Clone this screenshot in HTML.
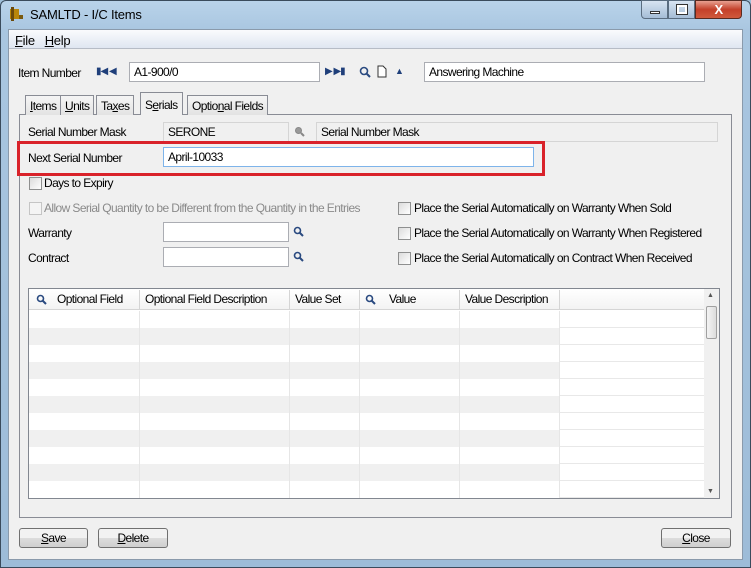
<!DOCTYPE html>
<html><head><style>
*{margin:0;padding:0;box-sizing:border-box}
body{width:751px;height:568px;overflow:hidden;background:#9fbfd9;font-family:"Liberation Sans",sans-serif;font-size:12px;color:#000;letter-spacing:-0.6px;position:relative}
.a{position:absolute}
.frame{left:0;top:0;width:751px;height:568px;background:linear-gradient(180deg,#b9d3ea 0,#a9c6e0 30px,#9dbcd8 100%);border:1px solid #3a4b5c;border-radius:6px 6px 0 0}
.client{left:8px;top:29px;width:735px;height:531px;background:#f0f0f0;border:1px solid #8a9aab}
.menu{left:9px;top:30px;width:733px;height:19px;background:linear-gradient(#fafbfd,#dfe6f1);border-bottom:1px solid #b6bcc6}
.in{background:#fff;border:1px solid #abadb3;height:20px;padding:2px 4px}
.dis{background:#f0f0f0;border:1px solid #d5d5d5;height:20px;padding:2px 4px}
.cb{width:13px;height:13px;border:1px solid #8e8f8f;background:linear-gradient(135deg,#dcdcdc,#fff)}
.btn{height:20px;border:1px solid #707070;border-radius:3px;background:linear-gradient(#f2f2f2 50%,#dddddd 50%,#cfcfcf);text-align:center;line-height:18px}
.tab{top:95px;height:20px;border:1px solid #898c95;border-bottom:none;background:linear-gradient(#f5f5f5,#e3e3e3);padding:3px 4px}
.hd{top:290px;height:20px;line-height:19px;border-right:1px solid #d5d5d5;padding-left:6px}
</style></head><body>
<div class="a frame"></div>
<svg class="a" style="left:8px;top:6px" width="16" height="16"><rect x="2" y="3" width="9" height="10" fill="#b8860b"/><rect x="3" y="1" width="3" height="14" fill="#6b4a0b"/><rect x="11" y="9" width="4" height="4" fill="#7a5a10"/></svg>
<div class="a" style="left:30px;top:7px;font-size:13px;letter-spacing:-0.2px">SAMLTD - I/C Items</div>
<div class="a" style="left:641px;top:0;width:27px;height:19px;border:1px solid #5a6d80;border-radius:0 0 0 4px;background:linear-gradient(#d7e4f2,#a5bdd6)"><div class="a" style="left:8px;top:10px;width:10px;height:3px;background:#fff;border:1px solid #333"></div></div>
<div class="a" style="left:668px;top:0;width:27px;height:19px;border:1px solid #5a6d80;background:linear-gradient(#d7e4f2,#a5bdd6)"><div class="a" style="left:8px;top:4px;width:10px;height:9px;border:2px solid #fff;outline:1px solid #333"></div></div>
<div class="a" style="left:695px;top:0;width:47px;height:19px;border:1px solid #5a2a20;border-radius:0 0 4px 0;background:linear-gradient(#e8a090,#c4402a 50%,#d05a3c);color:#fff;text-align:center;font-weight:bold;font-size:13px;line-height:17px">X</div>
<div class="a client"></div>
<div class="a menu"></div>
<div class="a" style="left:15px;top:33px;font-size:13px;letter-spacing:-0.3px"><u>F</u>ile &nbsp; <u>H</u>elp</div>

<div class="a" style="left:18px;top:66px">Item Number</div>
<div class="a" style="left:96px;top:66px;color:#1f3f7a;font-size:10px;letter-spacing:-1px">▮◀ ◀</div>
<div class="a in" style="left:129px;top:62px;width:191px">A1-900/0</div>
<div class="a" style="left:325px;top:66px;color:#1f3f7a;font-size:10px;letter-spacing:-1px">▶ ▶▮</div>
<svg class="a" style="left:359px;top:66px" width="12" height="12"><circle cx="5" cy="5" r="3.5" fill="none" stroke="#2a4a80" stroke-width="1.6"/><path d="M7.5 7.5L11 11" stroke="#2a4a80" stroke-width="2"/></svg>
<svg class="a" style="left:377px;top:65px" width="10" height="13"><path d="M1 1H6L9 4V12H1Z" fill="#fff" stroke="#333"/></svg>
<div class="a" style="left:395px;top:66px;color:#1f3f7a;font-size:9px">▲</div>
<div class="a in" style="left:424px;top:62px;width:281px">Answering Machine</div>

<div class="a" style="left:19px;top:114px;width:713px;height:404px;border:1px solid #898c95;background:#f0f0f0"></div>
<div class="a tab" style="left:25px"><u>I</u>tems</div>
<div class="a tab" style="left:60px"><u>U</u>nits</div>
<div class="a tab" style="left:96px">Ta<u>x</u>es</div>
<div class="a tab" style="left:140px;top:92px;height:23px;background:#f0f0f0;padding-top:5px">S<u>e</u>rials</div>
<div class="a tab" style="left:187px">Optio<u>n</u>al Fields</div>

<div class="a" style="left:28px;top:125px">Serial Number Mask</div>
<div class="a dis" style="left:163px;top:122px;width:126px">SERONE</div>
<svg class="a" style="left:294px;top:126px" width="11" height="11"><circle cx="4.5" cy="4.5" r="3" fill="#999" stroke="#888"/><path d="M7 7L10 10" stroke="#888" stroke-width="2"/></svg>
<div class="a dis" style="left:316px;top:122px;width:402px">Serial Number Mask</div>
<div class="a" style="left:17px;top:141px;width:528px;height:35px;border:3px solid #d9222a"></div>
<div class="a" style="left:28px;top:151px">Next Serial Number</div>
<div class="a in" style="left:163px;top:147px;width:371px;border-color:#7eb4ea">April-10033</div>
<div class="a cb" style="left:29px;top:177px"></div><div class="a" style="left:44px;top:176px">Days to Expiry</div>
<div class="a cb" style="left:29px;top:202px;border-color:#c5c5c5;background:#f4f4f4"></div><div class="a" style="left:44px;top:201px;color:#8a8a8a">Allow Serial Quantity to be Different from the Quantity in the Entries</div>
<div class="a" style="left:28px;top:226px">Warranty</div>
<div class="a in" style="left:163px;top:222px;width:126px"></div>
<div class="a" style="left:28px;top:251px">Contract</div>
<div class="a in" style="left:163px;top:247px;width:126px"></div>
<svg class="a" style="left:293px;top:226px" width="11" height="11"><circle cx="4.5" cy="4.5" r="3" fill="none" stroke="#2a4a80" stroke-width="1.6"/><path d="M6.5 6.5L10 10" stroke="#2a4a80" stroke-width="2"/></svg>
<svg class="a" style="left:293px;top:251px" width="11" height="11"><circle cx="4.5" cy="4.5" r="3" fill="none" stroke="#2a4a80" stroke-width="1.6"/><path d="M6.5 6.5L10 10" stroke="#2a4a80" stroke-width="2"/></svg>
<div class="a cb" style="left:398px;top:202px"></div><div class="a" style="left:414px;top:201px">Place the Serial Automatically on Warranty When Sold</div>
<div class="a cb" style="left:398px;top:227px"></div><div class="a" style="left:414px;top:226px">Place the Serial Automatically on Warranty When Registered</div>
<div class="a cb" style="left:398px;top:252px"></div><div class="a" style="left:414px;top:251px">Place the Serial Automatically on Contract When Received</div>

<div class="a" style="left:28px;top:288px;width:692px;height:211px;border:1px solid #828790;background:#fff"></div>
<div class="a" style="left:29px;top:289px;width:675px;height:21px;background:linear-gradient(#fff,#f3f3f3);border-bottom:1px solid #d5d5d5"></div>
<div class="a hd" style="left:29px;width:111px;padding-left:28px">Optional Field</div>
<div class="a hd" style="left:139px;width:151px">Optional Field Description</div>
<div class="a hd" style="left:289px;width:71px">Value Set</div>
<div class="a hd" style="left:359px;width:101px;padding-left:30px">Value</div>
<div class="a hd" style="left:459px;width:101px">Value Description</div>
<svg class="a" style="left:36px;top:294px" width="11" height="11"><circle cx="4.5" cy="4.5" r="3" fill="none" stroke="#2a4a80" stroke-width="1.6"/><path d="M6.5 6.5L10 10" stroke="#2a4a80" stroke-width="2"/></svg>
<svg class="a" style="left:365px;top:294px" width="11" height="11"><circle cx="4.5" cy="4.5" r="3" fill="none" stroke="#2a4a80" stroke-width="1.6"/><path d="M6.5 6.5L10 10" stroke="#2a4a80" stroke-width="2"/></svg>
<div class="a" style="left:29px;top:311px;width:530px;height:187px;background:repeating-linear-gradient(#fff 0,#fff 17px,#f0f0f0 17px,#f0f0f0 34px)"></div>
<div class="a" style="left:559px;top:311px;width:145px;height:187px;background:repeating-linear-gradient(#fff 0,#fff 16px,#e8e8e8 16px,#e8e8e8 17px)"></div>
<div class="a" style="left:139px;top:311px;width:1px;height:187px;background:#e6e6e6"></div>
<div class="a" style="left:289px;top:311px;width:1px;height:187px;background:#e6e6e6"></div>
<div class="a" style="left:359px;top:311px;width:1px;height:187px;background:#e6e6e6"></div>
<div class="a" style="left:459px;top:311px;width:1px;height:187px;background:#e6e6e6"></div>
<div class="a" style="left:559px;top:311px;width:1px;height:187px;background:#e6e6e6"></div>
<div class="a" style="left:704px;top:289px;width:15px;height:209px;background:#f0f0f0"></div>
<div class="a" style="left:706px;top:306px;width:11px;height:33px;border:1px solid #a0a0a0;border-radius:2px;background:linear-gradient(90deg,#f4f4f4,#dcdcdc)"></div>
<div class="a" style="left:707px;top:292px;font-size:7px;color:#555">▲</div>
<div class="a" style="left:707px;top:488px;font-size:7px;color:#555">▼</div>

<div class="a btn" style="left:19px;top:528px;width:69px"><u>S</u>ave</div>
<div class="a btn" style="left:98px;top:528px;width:70px"><u>D</u>elete</div>
<div class="a btn" style="left:661px;top:528px;width:70px"><u>C</u>lose</div>
</body></html>
